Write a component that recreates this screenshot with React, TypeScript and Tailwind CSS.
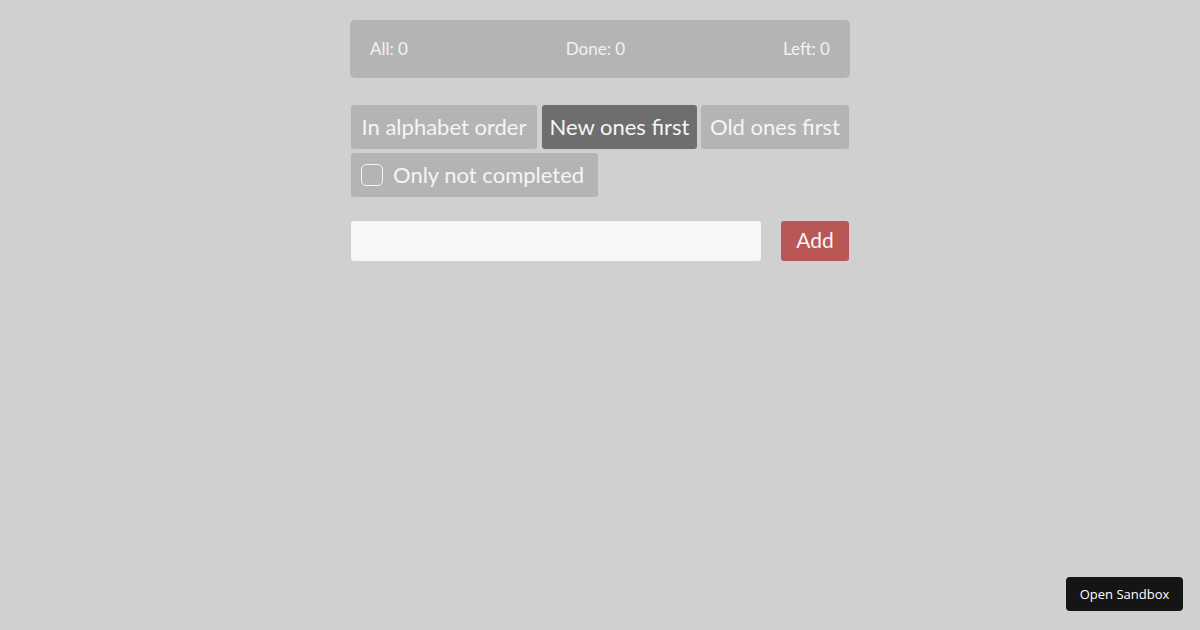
import React from "react";

export default function App() {
  const font = { fontFamily: "Lato, 'Open Sans', sans-serif" };
  return (
    <div className="relative w-full h-[630px] bg-[#d0d0d0] overflow-hidden" style={font}>
      <div className="w-[500px] mx-auto pt-5">
        <div className="h-[58px] rounded-[5px] bg-[#b4b4b4] flex items-center justify-between px-5 text-[17px] text-[#f2f2f2]">
          <span>All: 0</span>
          <span>Done: 0</span>
          <span>Left: 0</span>
        </div>
        <div className="mt-[27px] pl-px flex flex-wrap gap-x-[5px] gap-y-[5px] w-[500px]">
          <button className="w-[186px] h-[44px] pb-[2px] rounded-[3px] bg-[#b4b4b4] text-[#f5f5f5] text-[22px] flex items-center justify-center">In alphabet order</button>
          <button className="w-[155px] h-[44px] pb-[2px] rounded-[3px] bg-[#6e6e6e] text-[#f5f5f5] text-[22px] flex items-center justify-center">New ones first</button>
          <button className="w-[148px] h-[44px] pb-[2px] -ml-px rounded-[3px] bg-[#b4b4b4] text-[#f5f5f5] text-[22px] flex items-center justify-center">Old ones first</button>
          <label className="w-[247px] h-[44px] -mt-px rounded-[3px] bg-[#b4b4b4] text-[#f5f5f5] text-[22px] flex items-center pl-[10px]">
            <span className="w-[22px] h-[22px] rounded-[5px] border border-[#f5f5f5] mr-[10px]" />
            <span className="pb-[2px]">Only not completed</span>
          </label>
        </div>
        <div className="mt-6 pl-px flex items-center justify-between">
          <input className="w-[410px] h-10 rounded-[3px] bg-[#f7f7f7] outline-none px-2" />
          <button className="w-[68px] h-10 mr-px pb-[2px] rounded-[3px] bg-[#b95656] text-[#f5f5f5] text-[21px] flex items-center justify-center">Add</button>
        </div>
      </div>
      <div className="absolute right-[17px] bottom-[19px] w-[117px] h-[34px] pt-[2px] rounded-[4px] bg-[#151515] text-white text-[13px] flex items-center justify-center" style={{ fontFamily: "'Open Sans', sans-serif" }}>
        Open Sandbox
      </div>
    </div>
  );
}
